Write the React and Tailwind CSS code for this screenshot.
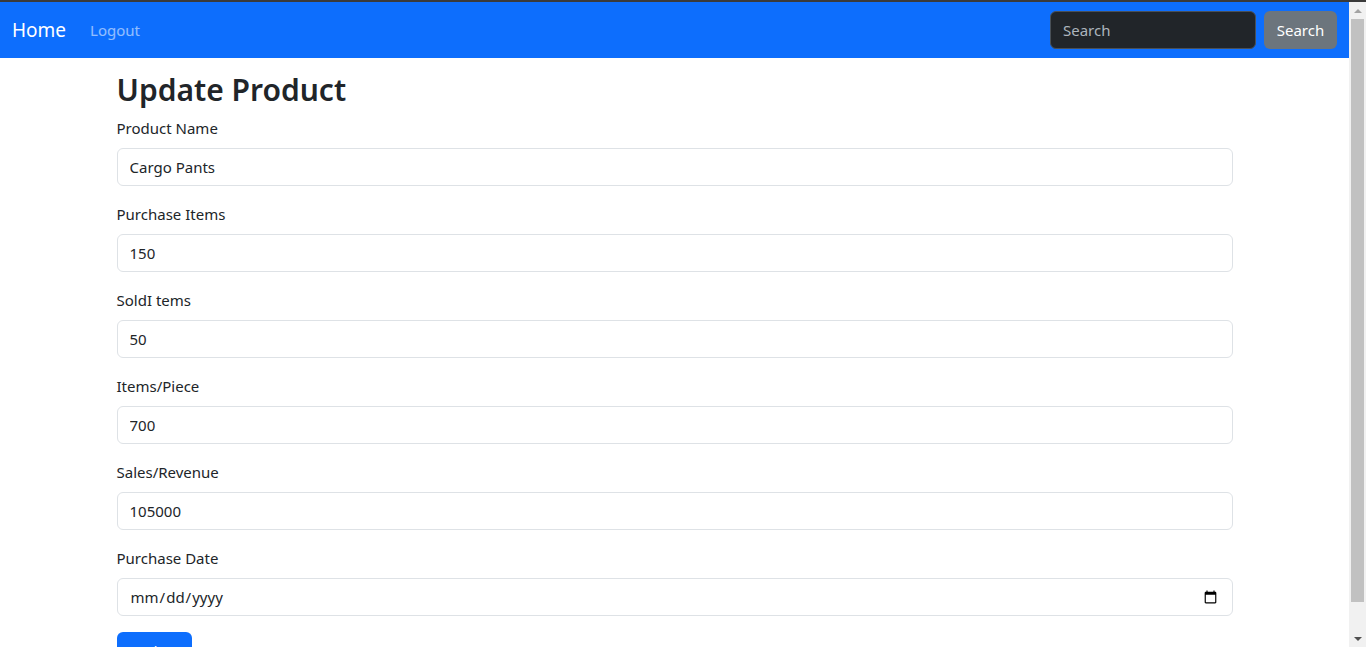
import React from "react";

const fields = [
  { id: "name", label: "Product Name", value: "Cargo Pants" },
  { id: "purchase", label: "Purchase Items", value: "150" },
  { id: "sold", label: "SoldI tems", value: "50" },
  { id: "piece", label: "Items/Piece", value: "700" },
  { id: "revenue", label: "Sales/Revenue", value: "105000" },
];

function App() {
  return (
    <div
      className="flex h-screen flex-col overflow-hidden border-t-2 border-[#3a3a3a] bg-white text-[#212529]"
      style={{ fontFamily: '"Noto Sans", "Liberation Sans", sans-serif' }}
    >
      <div className="flex min-h-0 flex-1">
        <div className="min-w-0 flex-1 overflow-hidden">
          {/* navbar */}
          <nav className="bg-[#0d6efd]">
            <div className="flex h-[56px] items-center justify-between px-3">
              <div className="flex items-center">
                <a href="#" className="mr-[24px] text-[19px] leading-[30px] text-white">
                  Home
                </a>
                <a href="#" className="text-[15px] text-white/55">
                  Logout
                </a>
              </div>
              <form className="flex items-center" onSubmit={(e) => e.preventDefault()}>
                <input
                  type="search"
                  placeholder="Search"
                  className="mr-2 h-[38px] w-[206px] rounded-[6px] border border-[#495057] bg-[#212529] px-3 text-[15px] text-white placeholder-[#adb5bd] outline-none"
                />
                <button
                  type="submit"
                  className="h-[38px] w-[73px] rounded-[6px] bg-[#6c757d] text-[15px] text-white"
                >
                  Search
                </button>
              </form>
            </div>
          </nav>

          {/* form */}
          <div className="mx-auto max-w-[1140px] px-3 pb-3">
            <h2 className="mt-[13px] mb-[7px] text-[30px] font-semibold leading-[38px]">
              Update Product
            </h2>
            <form onSubmit={(e) => e.preventDefault()}>
              {fields.map((f) => (
                <div key={f.id} className="mb-4">
                  <label htmlFor={f.id} className="mb-2 block text-[15px] leading-6">
                    {f.label}
                  </label>
                  <input
                    id={f.id}
                    type="text"
                    defaultValue={f.value}
                    className="block h-[38px] w-full rounded-[6px] border border-[#dee2e6] px-3 text-[15px] outline-none"
                  />
                </div>
              ))}
              <div className="mb-4">
                <label htmlFor="date" className="mb-2 block text-[15px] leading-6">
                  Purchase Date
                </label>
                <input
                  id="date"
                  type="date"
                  className="block h-[38px] w-full rounded-[6px] border border-[#dee2e6] px-3 text-[15px] outline-none"
                />
              </div>
              <button
                type="submit"
                className="h-[38px] w-[75px] rounded-[6px] bg-[#0d6efd] text-[15px] text-white"
              >
                Update
              </button>
            </form>
          </div>
        </div>

        {/* scrollbar */}
        <div className="flex w-[17px] shrink-0 flex-col bg-[#f1f1f1]">
          <div className="flex h-[17px] items-center justify-center">
            <div className="h-0 w-0 border-x-[4px] border-b-[4px] border-x-transparent border-b-[#a3a3a3]" />
          </div>
          <div className="mx-[2px] h-[583px] bg-[#c1c1c1]" />
          <div className="flex-1" />
          <div className="flex h-[17px] items-center justify-center">
            <div className="h-0 w-0 border-x-[4px] border-t-[4px] border-x-transparent border-t-[#505050]" />
          </div>
        </div>
      </div>
    </div>
  );
}

export default App;
